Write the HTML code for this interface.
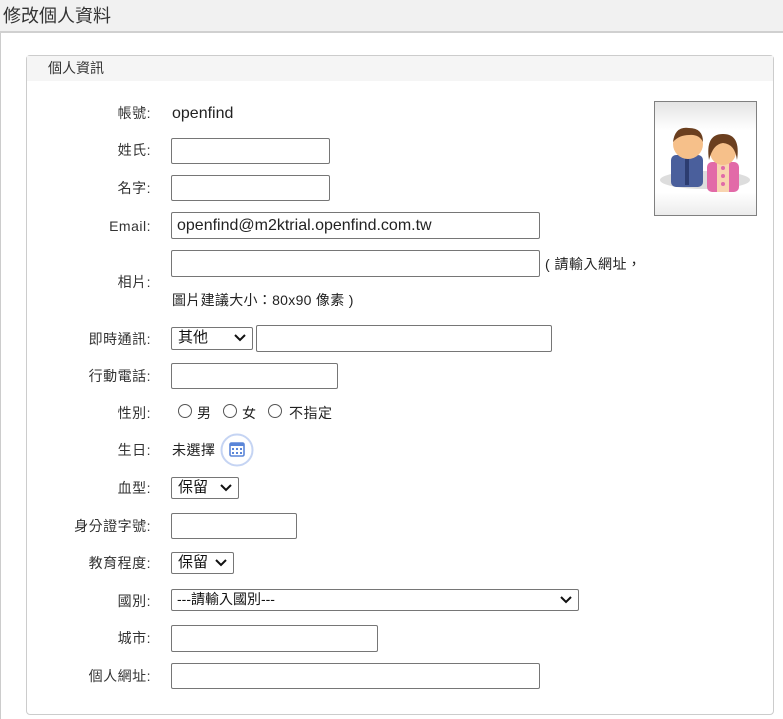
<!DOCTYPE html>
<html><head><meta charset="utf-8"><style>
*{box-sizing:border-box;margin:0;padding:0}
body{width:783px;height:719px;background:#fff;font-family:"Liberation Sans","Noto Sans CJK TC",sans-serif;font-size:14px;color:#222;position:relative;overflow:hidden}
.title{position:absolute;left:0;top:0;width:783px;height:33px;background:#f1f1f1;border-bottom:2px solid #d0d0d0;font-size:18px;line-height:32px;padding-left:3px;color:#333}
.outer{position:absolute;left:0;top:33px;width:1px;height:686px;background:#ccc}
.panel{position:absolute;left:26px;top:55px;width:748px;height:660px;border:1px solid #ccc;border-radius:4px}
.ph{position:absolute;left:27px;top:56px;width:746px;height:25px;background:#f5f5f5;line-height:25px;padding-left:21px;font-size:14px;color:#333}
.l{position:absolute;right:632px;font-size:14px;color:#333;line-height:16px;text-align:right;white-space:nowrap;letter-spacing:0.5px}
.t{position:absolute;font-size:14px;line-height:16px;white-space:nowrap;color:#222}
.i{position:absolute;border:1px solid #767676;border-radius:2px;background:#fff}
.s{position:absolute;border:1px solid #767676;border-radius:2px;background:#fff;font-size:15px;line-height:19px;padding-left:6px;color:#111}
.s svg{position:absolute;right:6px;top:6px}
.r{position:absolute;width:14px;height:14px;border:1px solid #555;border-radius:50%;top:404px}
</style></head><body>
<div class="title">修改個人資料</div>
<div class="outer"></div>
<div class="panel"></div>
<div class="ph">個人資訊</div>

<div class="l" style="top:105px">帳號:</div><div class="t" style="left:172px;top:105px;font-size:16px;line-height:18px">openfind</div>
<div class="l" style="top:142px">姓氏:</div><div class="i" style="left:171px;top:138px;width:159px;height:26px"></div>
<div class="l" style="top:180px">名字:</div><div class="i" style="left:171px;top:175px;width:159px;height:26px"></div>
<div class="l" style="top:218px">Email:</div><div class="i" style="left:171px;top:212px;width:369px;height:27px;font-size:16px;line-height:26px;padding-left:5px">openfind@m2ktrial.openfind.com.tw</div>
<div class="l" style="top:274px">相片:</div><div class="i" style="left:171px;top:250px;width:369px;height:27px"></div>
<div class="t" style="left:545px;top:256px;letter-spacing:0.5px">(&nbsp;請輸入網址，</div>
<div class="t" style="left:172px;top:292px;letter-spacing:0.3px">圖片建議大小：80x90 像素 )</div>
<div class="l" style="top:331px">即時通訊:</div>
<div class="s" style="left:171px;top:327px;width:82px;height:23px">其他<svg width="12" height="8" viewBox="0 0 12 8"><path d="M1 1l5 5 5-5" stroke="#111" stroke-width="2" fill="none"/></svg></div>
<div class="i" style="left:256px;top:325px;width:296px;height:27px"></div>
<div class="l" style="top:368px">行動電話:</div><div class="i" style="left:171px;top:363px;width:167px;height:26px"></div>
<div class="l" style="top:405px">性別:</div>
<div class="r" style="left:178px"></div><div class="t" style="left:197px;top:405px">男</div>
<div class="r" style="left:223px"></div><div class="t" style="left:242px;top:405px">女</div>
<div class="r" style="left:268px"></div><div class="t" style="left:289px;top:405px;letter-spacing:0.5px">不指定</div>
<div class="l" style="top:442px">生日:</div><div class="t" style="left:172px;top:442px;letter-spacing:0.5px">未選擇</div>
<svg style="position:absolute;left:220px;top:433px" width="34" height="34" viewBox="0 0 34 34"><circle cx="17" cy="17" r="15.5" fill="#fff" stroke="#c5d4f3" stroke-width="2"/><rect x="10" y="10" width="14" height="13" rx="1.5" fill="none" stroke="#5b86d8" stroke-width="1.6"/><rect x="10" y="10" width="14" height="3" fill="#5b86d8"/><g fill="#5b86d8"><rect x="12" y="15" width="2" height="2"/><rect x="16" y="15" width="2" height="2"/><rect x="20" y="15" width="2" height="2"/><rect x="12" y="19" width="2" height="2"/><rect x="16" y="19" width="2" height="2"/><rect x="20" y="19" width="2" height="2"/></g></svg>
<div class="l" style="top:480px">血型:</div>
<div class="s" style="left:171px;top:477px;width:68px;height:22px">保留<svg width="12" height="8" viewBox="0 0 12 8"><path d="M1 1l5 5 5-5" stroke="#111" stroke-width="2" fill="none"/></svg></div>
<div class="l" style="top:518px">身分證字號:</div><div class="i" style="left:171px;top:513px;width:126px;height:26px"></div>
<div class="l" style="top:555px">教育程度:</div>
<div class="s" style="left:171px;top:552px;width:63px;height:22px">保留<svg width="12" height="8" viewBox="0 0 12 8"><path d="M1 1l5 5 5-5" stroke="#111" stroke-width="2" fill="none"/></svg></div>
<div class="l" style="top:593px">國別:</div>
<div class="s" style="left:171px;top:589px;width:408px;height:22px;font-size:14px;padding-left:5px">---請輸入國別---<svg width="12" height="8" viewBox="0 0 12 8"><path d="M1 1l5 5 5-5" stroke="#111" stroke-width="2" fill="none"/></svg></div>
<div class="l" style="top:630px">城市:</div><div class="i" style="left:171px;top:625px;width:207px;height:27px"></div>
<div class="l" style="top:668px">個人網址:</div><div class="i" style="left:171px;top:663px;width:369px;height:26px"></div>

<div style="position:absolute;left:654px;top:101px;width:103px;height:115px;border:1px solid #808080;background:linear-gradient(#e4e4e4,#fff 25%,#fff 80%,#ececec)">
<svg width="101" height="113" viewBox="0 0 101 113">
<ellipse cx="50" cy="78" rx="45" ry="9" fill="#ddd"/>
<rect x="16" y="53" width="32" height="32" rx="5" fill="#4a5f9c"/>
<rect x="30" y="55" width="4" height="28" fill="#2c3c70"/>
<circle cx="33" cy="42" r="15" fill="#f6c08a"/>
<path d="M18 40 Q20 24 34 26 Q48 26 48 40 Q44 32 34 33 Q24 33 18 40z" fill="#6b3f1f"/>
<rect x="52" y="60" width="32" height="30" rx="5" fill="#e26aa8"/>
<rect x="62" y="60" width="12" height="30" fill="#f8d4b0"/>
<circle cx="68" cy="66" r="2" fill="#e06aa8"/><circle cx="68" cy="74" r="2" fill="#e06aa8"/><circle cx="68" cy="82" r="2" fill="#e06aa8"/>
<circle cx="68" cy="50" r="13" fill="#f6c08a"/>
<path d="M54 58 Q50 32 68 32 Q86 32 82 58 Q80 42 68 41 Q58 42 54 58z" fill="#6b3f1f"/>
</svg></div>
</body></html>
